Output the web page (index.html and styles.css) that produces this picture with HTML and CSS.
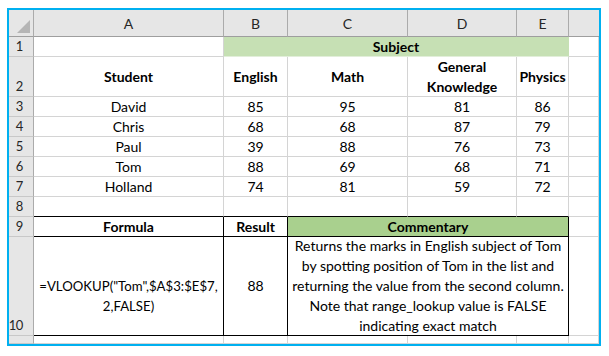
FILE: index.html
```html
<!DOCTYPE html>
<html>
<head>
<meta charset="utf-8">
<link rel="stylesheet" href="styles.css">
</head>
<body>
<div class="frame">
  <div class="sheet">
    <div class="ch corner"><span class="tri"></span></div>
    <div class="ch">A</div>
    <div class="ch">B</div>
    <div class="ch">C</div>
    <div class="ch">D</div>
    <div class="ch">E</div>
    <div class="ch chf"></div>

    <div class="rh">1</div>
    <div class="c"></div>
    <div class="c subject b span4">Subject</div>
    <div class="c"></div>

    <div class="rh">2</div>
    <div class="c b">Student</div>
    <div class="c b">English</div>
    <div class="c b">Math</div>
    <div class="c b wrap">General<br>Knowledge</div>
    <div class="c b">Physics</div>
    <div class="c"></div>

    <div class="rh">3</div>
    <div class="c">David</div><div class="c">85</div><div class="c">95</div><div class="c">81</div><div class="c">86</div><div class="c"></div>
    <div class="rh">4</div>
    <div class="c">Chris</div><div class="c">68</div><div class="c">68</div><div class="c">87</div><div class="c">79</div><div class="c"></div>
    <div class="rh">5</div>
    <div class="c">Paul</div><div class="c">39</div><div class="c">88</div><div class="c">76</div><div class="c">73</div><div class="c"></div>
    <div class="rh">6</div>
    <div class="c">Tom</div><div class="c">88</div><div class="c">69</div><div class="c">68</div><div class="c">71</div><div class="c"></div>
    <div class="rh">7</div>
    <div class="c">Holland</div><div class="c">74</div><div class="c">81</div><div class="c">59</div><div class="c">72</div><div class="c"></div>

    <div class="rh">8</div>
    <div class="c kb"></div><div class="c kb"></div><div class="c kb"></div><div class="c kb"></div><div class="c kb"></div><div class="c"></div>

    <div class="rh">9</div>
    <div class="c b k">Formula</div>
    <div class="c b k">Result</div>
    <div class="c b k comm span3">Commentary</div>
    <div class="c"></div>

    <div class="rh">10</div>
    <div class="c k wrap formula">=VLOOKUP("Tom",$A$3:$E$7,<br>2,FALSE)</div>
    <div class="c k">88</div>
    <div class="c k wrap span3">Returns the marks in English subject of Tom<br>by spotting position of Tom in the list and<br>returning the value from the second column.<br>Note that range_lookup value is FALSE<br>indicating exact match</div>
    <div class="c"></div>

    <div class="rh rlast">11</div>
    <div class="c"></div><div class="c"></div><div class="c"></div><div class="c"></div><div class="c"></div><div class="c"></div>
  </div>
</div>
</body>
</html>
```
FILE: styles.css
```css
html, body {
  margin: 0;
  padding: 0;
  background: #ffffff;
}
.frame {
  margin: 8px 0 0 7px;
  width: 590px;
  height: 334px;
  border: 2px solid #00B0F0;
  overflow: hidden;
  font-family: Lato, "Liberation Sans", sans-serif;
  font-size: 14px;
  color: #000;
}
.sheet {
  display: grid;
  grid-template-columns: 25px 190px 64px 120px 109px 52px 30px;
  grid-template-rows: 27px 20px 40px 20px 20px 20px 20px 20px 20px 20px 99px 8px;
}
.sheet > div {
  box-sizing: border-box;
  border-right: 1px solid #D4D4D4;
  border-bottom: 1px solid #D4D4D4;
  display: flex;
  align-items: center;
  justify-content: center;
  text-align: center;
  line-height: 20px;
  white-space: nowrap;
  overflow: hidden;
}
.sheet > .ch {
  background: #E6E6E6;
  border-right-color: #ABABAB;
  border-bottom-color: #9E9E9E;
  color: #262626;
  padding-top: 2px;
}
.sheet > .chf {
  border-right: 0;
}
.corner {
  position: relative;
}
.tri {
  position: absolute;
  right: 3px;
  bottom: 3px;
  width: 0;
  height: 0;
  border-left: 13px solid transparent;
  border-bottom: 13px solid #B5B5B5;
}
.sheet > .rh {
  background: #E6E6E6;
  border-right-color: #ABABAB;
  border-bottom-color: #C8C8C8;
  color: #262626;
  justify-content: flex-end;
  align-items: flex-end;
  padding-right: 10px;
  line-height: 19px;
  font-size: 13px;
  letter-spacing: -0.4px;
  overflow: visible;
}
.sheet > .rlast {
  align-items: flex-start;
  padding-top: 3px;
  overflow: hidden;
}
.b {
  font-weight: bold;
}
.span4 {
  grid-column: span 4;
}
.span3 {
  grid-column: span 3;
}
.sheet > .subject {
  background: #C6E0B4;
  border-right-color: #C6E0B4;
  border-bottom-color: #E2EEDA;
}
.sheet > .kb {
  border-bottom-color: #000;
}
.sheet > .k {
  border-right-color: #000;
  border-bottom-color: #000;
}
.sheet > .comm {
  background: #A9D08E;
}
.sheet > .formula {
  padding-top: 20px;
  font-size: 13.2px;
}
```
